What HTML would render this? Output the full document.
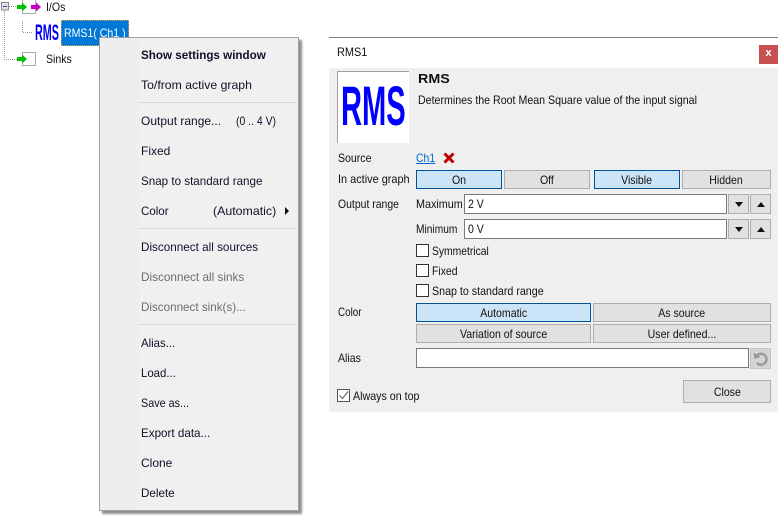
<!DOCTYPE html>
<html><head><meta charset="utf-8"><style>
*{box-sizing:border-box}
html,body{margin:0;padding:0;width:778px;height:516px;overflow:hidden;background:#fff}
body{position:relative;font:12px "Liberation Sans",sans-serif;color:#111}
.a{position:absolute}
.t{position:absolute;white-space:nowrap;line-height:14px;height:14px;transform-origin:0 50%;transform:scaleX(.88)}
.b{position:absolute;display:flex;align-items:center;justify-content:center;background:#e1e1e1;border:1px solid #adadad;white-space:nowrap}
.b span{display:inline-block;transform:scaleX(.88)}
.s{background:#cce4f7;border-color:#005499}
.i{position:absolute;background:#fff;border:1px solid #7a7a7a;padding:0 0 0 3px;line-height:18px;white-space:nowrap}
.i span{display:inline-block;transform-origin:0 50%;transform:scaleX(.88)}
.c{position:absolute;width:13px;height:13px;background:#fff;border:1px solid #333}
.m{position:absolute;left:141px;white-space:nowrap;line-height:14px;color:#101028;transform-origin:0 50%}
.sep{position:absolute;left:139px;width:158px;height:1px;background:#d7d7d7}
</style></head><body>
<!-- tree -->
<svg class="a" style="left:0;top:0" width="70" height="70">
<path d="M4.500 11V59.500H18M9 6.500H18M22.500 21V32.500H33" fill="none" stroke="#999" stroke-dasharray="1 1"/>
<rect x="1.500" y="2.500" width="7" height="7.500" fill="#e0e0e8" stroke="#8a8a8a"/><path d="M3 6.500h4" stroke="#2a4a9a"/>
<rect x="22.500" y="-1" width="13" height="14.500" fill="#fff" stroke="#aaa"/>
<rect x="22.500" y="52.500" width="13" height="13" fill="#fff" stroke="#aaa"/>
<path d="M17 5h5V2.500L27 7l-5 4.500V9h-5z" fill="#00c000"/>
<path d="M17 57h5V54.500L27 59l-5 4.500V61h-5z" fill="#00c000"/>
<path d="M31 5h5V2.500L41 7l-5 4.500V9h-5z" fill="#c000c0"/>
</svg>
<div class="t" style="left:46px;top:0">I/Os</div>
<div class="t" style="left:46px;top:52px">Sinks</div>
<div class="t" style="left:35px;top:22px;color:#0000f0;font-weight:bold;font-size:22px;line-height:22px;height:22px;transform:scaleX(.49)">RMS</div>
<div class="a" style="left:61px;top:20px;width:68px;height:26px;background:#0078d7;border:1px dotted #e8a040"></div>
<div class="t" style="left:64px;top:26px;color:#fff;transform:scaleX(.88)">RMS1( Ch1 )</div>

<!-- menu -->
<div class="a" style="left:99px;top:37px;width:200px;height:474px;background:#f0f0f0;border:1px solid #a0a0a0;box-shadow:3px 3px 2px #8f8f8f"></div>
<div class="a" style="left:100px;top:38px;width:39px;height:472px;background:#eeeeee"></div>
<div class="m" style="top:48px;font-weight:bold;transform:scaleX(.97)">Show settings window</div>
<div class="m" style="top:78px;transform:scaleX(1.02)">To/from active graph</div>
<div class="sep" style="top:102px"></div>
<div class="m" style="top:114px">Output range...</div>
<div class="m" style="top:114px;left:236px;transform:scaleX(.87)">(0 .. 4 V)</div>
<div class="m" style="top:144px">Fixed</div>
<div class="m" style="top:174px;transform:scaleX(.968)">Snap to standard range</div>
<div class="m" style="top:204px;transform:scaleX(.96)">Color</div>
<div class="m" style="top:204px;left:213px;transform:scaleX(1.03)">(Automatic)</div>
<svg class="a" style="left:285px;top:207px" width="5" height="8"><path d="M0 0l4 4-4 4z" fill="#111"/></svg>
<div class="sep" style="top:228px"></div>
<div class="m" style="top:240px;transform:scaleX(.975)">Disconnect all sources</div>
<div class="m" style="top:270px;color:#6d6d6d;transform:scaleX(.98)">Disconnect all sinks</div>
<div class="m" style="top:300px;color:#6d6d6d;transform:scaleX(.97)">Disconnect sink(s)...</div>
<div class="sep" style="top:324px"></div>
<div class="m" style="top:336px;transform:scaleX(.95)">Alias...</div>
<div class="m" style="top:366px;transform:scaleX(.95)">Load...</div>
<div class="m" style="top:396px;transform:scaleX(.9)">Save as...</div>
<div class="m" style="top:426px;transform:scaleX(.97)">Export data...</div>
<div class="m" style="top:456px">Clone</div>
<div class="m" style="top:486px;transform:scaleX(.97)">Delete</div>

<!-- dialog -->
<div class="a" style="left:329px;top:37px;width:449px;height:1px;background:#808080"></div>
<div class="a" style="left:329px;top:68px;width:449px;height:344px;background:#efefef"></div>
<div class="t" style="left:337px;top:45px;transform:scaleX(.91)">RMS1</div>
<div class="a" style="left:759px;top:45px;width:19px;height:19px;background:#c75050;color:#fff;font:bold 11px/19px 'Liberation Mono',monospace;text-align:center">x</div>

<div class="a" style="left:337px;top:71px;width:72px;height:72px;background:#fff;border-top:1px solid #a0a0a0;border-left:1px solid #a0a0a0"></div>
<div class="t" style="left:341px;top:78px;height:56px;line-height:56px;font-size:56px;font-weight:bold;color:#0000ff;transform:scaleX(.52)">RMS</div>
<div class="t" style="left:418px;top:72px;font-weight:bold;font-size:13px;transform:scaleX(1.1)">RMS</div>
<div class="t" style="left:418px;top:93px;transform:scaleX(.886)">Determines the Root Mean Square value of the input signal</div>

<div class="t" style="left:338px;top:151px">Source</div>
<div class="t" style="left:416px;top:151px;color:#0066cc;text-decoration:underline;transform:scaleX(.87)">Ch1</div>
<svg class="a" style="left:443px;top:152px" width="12" height="12"><path d="M1.500 1.500l9 9M10.500 1.500l-9 9" stroke="#c00000" stroke-width="3"/></svg>

<div class="t" style="left:338px;top:172px;transform:scaleX(.91)">In active graph</div>
<div class="b s" style="left:416px;top:170px;width:86px;height:19px"><span>On</span></div>
<div class="b" style="left:504px;top:170px;width:86px;height:19px"><span>Off</span></div>
<div class="b s" style="left:594px;top:170px;width:86px;height:19px"><span>Visible</span></div>
<div class="b" style="left:682px;top:170px;width:89px;height:19px"><span>Hidden</span></div>

<div class="t" style="left:338px;top:197px;transform:scaleX(.87)">Output range</div>
<div class="t" style="left:416px;top:197px;transform:scaleX(.9)">Maximum</div>
<div class="i" style="left:464px;top:194px;width:263px;height:20px"><span>2 V</span></div>
<div class="b" style="left:728px;top:194px;width:21px;height:20px"><svg width="8" height="5"><path d="M0 0h8L4 5z" fill="#111"/></svg></div>
<div class="b" style="left:750px;top:194px;width:21px;height:20px"><svg width="8" height="5"><path d="M0 5h8L4 0z" fill="#111"/></svg></div>
<div class="t" style="left:416px;top:222px;transform:scaleX(.85)">Minimum</div>
<div class="i" style="left:464px;top:219px;width:263px;height:20px"><span>0 V</span></div>
<div class="b" style="left:728px;top:219px;width:21px;height:20px"><svg width="8" height="5"><path d="M0 0h8L4 5z" fill="#111"/></svg></div>
<div class="b" style="left:750px;top:219px;width:21px;height:20px"><svg width="8" height="5"><path d="M0 5h8L4 0z" fill="#111"/></svg></div>

<div class="c" style="left:416px;top:244px"></div><div class="t" style="left:432px;top:244px;transform:scaleX(.86)">Symmetrical</div>
<div class="c" style="left:416px;top:264px"></div><div class="t" style="left:432px;top:264px;transform:scaleX(.87)">Fixed</div>
<div class="c" style="left:416px;top:284px"></div><div class="t" style="left:432px;top:284px;transform:scaleX(.89)">Snap to standard range</div>

<div class="t" style="left:338px;top:305px;transform:scaleX(.82)">Color</div>
<div class="b s" style="left:416px;top:303px;width:175px;height:19px"><span>Automatic</span></div>
<div class="b" style="left:593px;top:303px;width:178px;height:19px"><span>As source</span></div>
<div class="b" style="left:416px;top:324px;width:175px;height:19px"><span>Variation of source</span></div>
<div class="b" style="left:593px;top:324px;width:178px;height:19px"><span>User defined...</span></div>

<div class="t" style="left:338px;top:351px;transform:scaleX(.88)">Alias</div>
<div class="i" style="left:416px;top:348px;width:333px;height:20px"></div>
<div class="b" style="left:750px;top:348px;width:21px;height:21px;background:#d4d4d4;border-color:#c4c4c4"><svg width="17" height="17" viewBox="0 0 17 17"><path d="M5 5.500A5.500 5.500 0 1 1 5 13" fill="none" stroke="#999" stroke-width="2.400"/><path d="M1.500 2.500L2.500 9L8.500 7z" fill="#999"/></svg></div>

<div class="c" style="left:337px;top:389px;border-color:#555"></div>
<svg class="a" style="left:338px;top:390px" width="11" height="11"><path d="M1.500 5.500l3 3 5.500-7" fill="none" stroke="#666" stroke-width="1.200"/></svg>
<div class="t" style="left:353px;top:389px;transform:scaleX(.89)">Always on top</div>
<div class="b" style="left:683px;top:380px;width:88px;height:23px"><span>Close</span></div>
</body></html>
